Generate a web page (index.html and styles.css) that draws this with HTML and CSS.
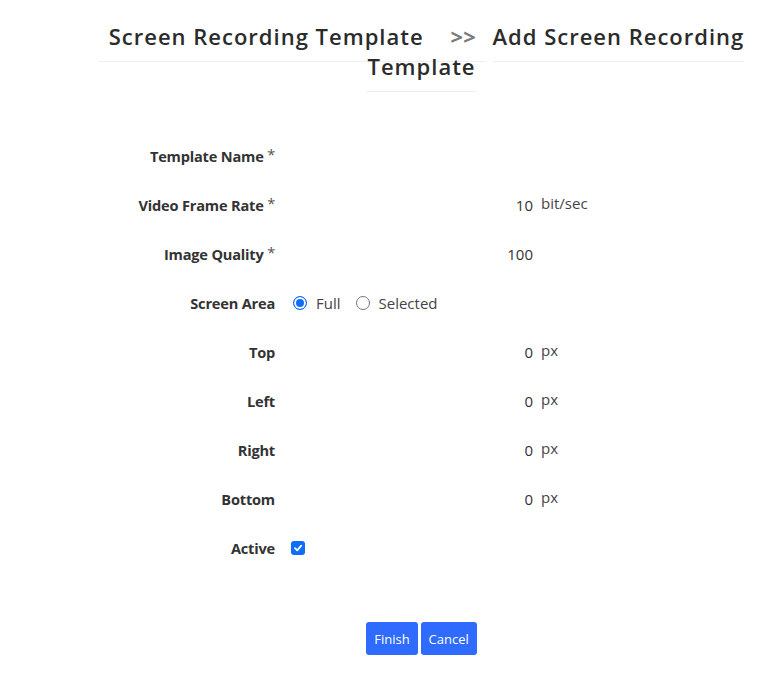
FILE: index.html
```html
<!DOCTYPE html>
<html>
<head>
<meta charset="utf-8">
<link rel="stylesheet" href="styles.css">
</head>
<body>
<div class="page">
  <h2 class="title"><span class="crumb first">Screen Recording Template</span><span class="crumb sep">&gt;&gt;</span> <span class="crumb">Add Screen Recording</span> <span class="crumb">Template</span></h2>

  <form class="form">
    <div class="row">
      <label class="label">Template Name <span class="req">*</span></label>
      <div class="field"><input class="input" type="text" value=""></div>
    </div>
    <div class="row">
      <label class="label">Video Frame Rate <span class="req">*</span></label>
      <div class="field"><input class="input" type="text" value="10"><span class="unit">bit/sec</span></div>
    </div>
    <div class="row">
      <label class="label">Image Quality <span class="req">*</span></label>
      <div class="field"><input class="input" type="text" value="100"></div>
    </div>
    <div class="row">
      <label class="label">Screen Area</label>
      <div class="field radios">
        <label class="opt"><span class="radio on"></span>Full</label>
        <label class="opt"><span class="radio"></span>Selected</label>
      </div>
    </div>
    <div class="row">
      <label class="label">Top</label>
      <div class="field"><input class="input" type="text" value="0"><span class="unit">px</span></div>
    </div>
    <div class="row">
      <label class="label">Left</label>
      <div class="field"><input class="input" type="text" value="0"><span class="unit">px</span></div>
    </div>
    <div class="row">
      <label class="label">Right</label>
      <div class="field"><input class="input" type="text" value="0"><span class="unit">px</span></div>
    </div>
    <div class="row">
      <label class="label">Bottom</label>
      <div class="field"><input class="input" type="text" value="0"><span class="unit">px</span></div>
    </div>
    <div class="row">
      <label class="label">Active</label>
      <div class="field"><span class="check"><svg width="10" height="10" viewBox="0 0 10 10"><path d="M2 5.2 L4.2 7.3 L8.2 2.6" fill="none" stroke="#fff" stroke-width="1.8" stroke-linecap="round" stroke-linejoin="round"/></svg></span></div>
    </div>
    <div class="actions">
      <button type="button" class="btn">Finish</button>
      <button type="button" class="btn">Cancel</button>
    </div>
  </form>
</div>
</body>
</html>
```

FILE: styles.css
```css
html, body {
  margin: 0;
  padding: 0;
  background: #fff;
}
body {
  font-family: "Open Sans", "Noto Sans", sans-serif;
  color: #212529;
}
.page {
  padding-left: 62px;
  width: 719px;
}
.title {
  margin: 21px 0 0;
  text-align: center;
  font-size: 22px;
  line-height: 30px;
  font-weight: 600;
  letter-spacing: 1px;
  color: #2b2b2b;
}
.crumb {
  border-bottom: 1px solid #eeeeee;
  padding-bottom: 10px;
}
.crumb.first {
  padding-left: 10px;
}
.crumb.sep {
  color: #7a7a7a;
  font-weight: 700;
  padding-left: 27px;
  padding-right: 10px;
  letter-spacing: 0;
}
.form {
  margin-top: 50px;
}
.row {
  display: flex;
  align-items: center;
  height: 49px;
  margin-left: -62px;
}
.label {
  width: 275px;
  text-align: right;
  font-size: 14.6px;
  font-weight: 700;
  color: #333;
  font-family: "Open Sans", sans-serif;
  letter-spacing: -0.2px;
}
.req {
  font-weight: 400;
  color: #555;
  position: relative;
  top: -2px;
}
.field {
  margin-left: 15px;
  display: flex;
  align-items: center;
}
.input {
  width: 247px;
  height: 36px;
  box-sizing: border-box;
  border: none;
  outline: none;
  padding: 0 4px 0 0;
  text-align: right;
  font-family: "Open Sans", sans-serif;
  font-size: 15px;
  color: #333;
  background: transparent;
}
.unit {
  margin-left: 4px;
  font-size: 15px;
  color: #444;
  position: relative;
  top: -2px;
}
.radios {
  margin-left: 18px;
}
.opt {
  display: flex;
  align-items: center;
  font-size: 15px;
  color: #444;
  margin-right: 15px;
}
.radio {
  width: 14px;
  height: 14px;
  border-radius: 50%;
  border: 1px solid #777;
  box-sizing: border-box;
  margin-right: 9px;
  background: #fff;
}
.radio.on {
  border: 1.5px solid #0d6efd;
  background: #0d6efd;
  box-shadow: inset 0 0 0 2px #fff;
}
.check {
  margin-left: 1px;
  width: 14px;
  height: 14px;
  border-radius: 3px;
  background: #0d6efd;
  display: flex;
  align-items: center;
  justify-content: center;
}
.actions {
  display: flex;
  justify-content: center;
  gap: 3px;
  margin-top: 50px;
}
.btn {
  height: 33px;
  padding: 0 8px;
  border: none;
  border-radius: 3px;
  background: #2f6bff;
  color: #fff;
  font-family: "Open Sans", sans-serif;
  font-size: 13px;
}
```
